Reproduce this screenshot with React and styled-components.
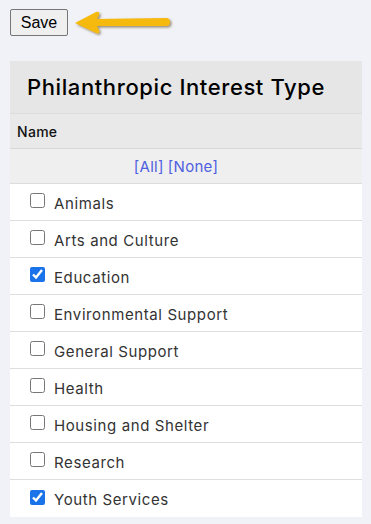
import styled, { createGlobalStyle } from "styled-components";

const GlobalStyle = createGlobalStyle`
  body {
    margin: 0;
    background: #f1f2f7;
    font-family: "Inter", "Liberation Sans", sans-serif;
  }
`;

const interests = [
  { name: "Animals", checked: false },
  { name: "Arts and Culture", checked: false },
  { name: "Education", checked: true },
  { name: "Environmental Support", checked: false },
  { name: "General Support", checked: false },
  { name: "Health", checked: false },
  { name: "Housing and Shelter", checked: false },
  { name: "Research", checked: false },
  { name: "Youth Services", checked: true },
];

const Arrow = () => (
  <svg width="100" height="26" viewBox="0 0 100 26">
    <defs>
      <filter id="sh" x="-10%" y="-30%" width="130%" height="170%">
        <feDropShadow dx="1.5" dy="1.5" stdDeviation="0.8" floodColor="#5a4a20" floodOpacity="0.6" />
      </filter>
    </defs>
    <path
      d="M1 13 L22 2 Q26 0.5 25 5 L23 9 L92 8 Q96 8 96 12 Q96 16 92 16 L23 16 L25 20 Q26 24.5 22 23 Z"
      fill="#f6b90f"
      filter="url(#sh)"
    />
  </svg>
);

const App = () => {
  return (
    <Page>
      <GlobalStyle />
      <TopBar>
        <SaveButton>Save</SaveButton>
        <Arrow />
      </TopBar>
      <Panel>
        <Title>Philanthropic Interest Type</Title>
        <HeadRow>Name</HeadRow>
        <LinkRow>
          <StyledLink href="#">[All]</StyledLink> <StyledLink href="#">[None]</StyledLink>
        </LinkRow>
        {interests.map((item) => (
          <ItemRow key={item.name}>
            <Check type="checkbox" defaultChecked={item.checked} />
            <ItemName>{item.name}</ItemName>
          </ItemRow>
        ))}
      </Panel>
    </Page>
  );
};

const Page = styled.div`
  padding: 9px 9px 6px 10px;
`;

const TopBar = styled.div`
  display: flex;
  align-items: center;
  gap: 6px;
  height: 27px;
`;

const SaveButton = styled.button`
  width: 58px;
  height: 27px;
  font-family: "Liberation Sans", Arial, sans-serif;
  font-size: 16px;
  color: #000;
  background: #efefef;
  border: 1px solid #767676;
  border-radius: 2px;
  padding: 0;
`;

const Panel = styled.div`
  margin-top: 25px;
  background: #fff;
  display: flex;
  flex-direction: column;
`;

const Title = styled.div`
  background: #e6e6e6;
  height: 53px;
  padding-left: 17px;
  display: flex;
  align-items: center;
  font-size: 22px;
  font-weight: 500;
  letter-spacing: 0.6px;
  color: #000;
  border-bottom: 1px solid #dcdcdc;
  box-sizing: border-box;
`;

const HeadRow = styled.div`
  background: #e9e9e9;
  height: 35px;
  padding-left: 7px;
  display: flex;
  align-items: center;
  font-size: 14px;
  font-weight: 500;
  letter-spacing: 0.3px;
  color: #111;
  border-bottom: 1px solid #d8d8d8;
  box-sizing: border-box;
`;

const LinkRow = styled.div`
  background: #efefef;
  height: 35px;
  display: flex;
  align-items: center;
  justify-content: center;
  padding-right: 20px;
  gap: 4px;
  border-bottom: 1px solid #dcdcdc;
  box-sizing: border-box;
  font-size: 15px;
  letter-spacing: 0.3px;
`;

const StyledLink = styled.a`
  color: #4f5fe0;
  text-decoration: none;
`;

const ItemRow = styled.label`
  height: 37px;
  display: flex;
  align-items: center;
  padding-left: 20px;
  padding-top: 2px;
  gap: 9px;
  border-bottom: 1px solid #dedede;
  box-sizing: border-box;
  font-size: 15px;
  color: #333;

  &:last-child {
    border-bottom: none;
  }
`;

const Check = styled.input`
  width: 15px;
  height: 15px;
  margin: 0 0 5px 0;
  accent-color: #1a73e8;
`;

const ItemName = styled.span`
  letter-spacing: 0.6px;
`;

export default App;
